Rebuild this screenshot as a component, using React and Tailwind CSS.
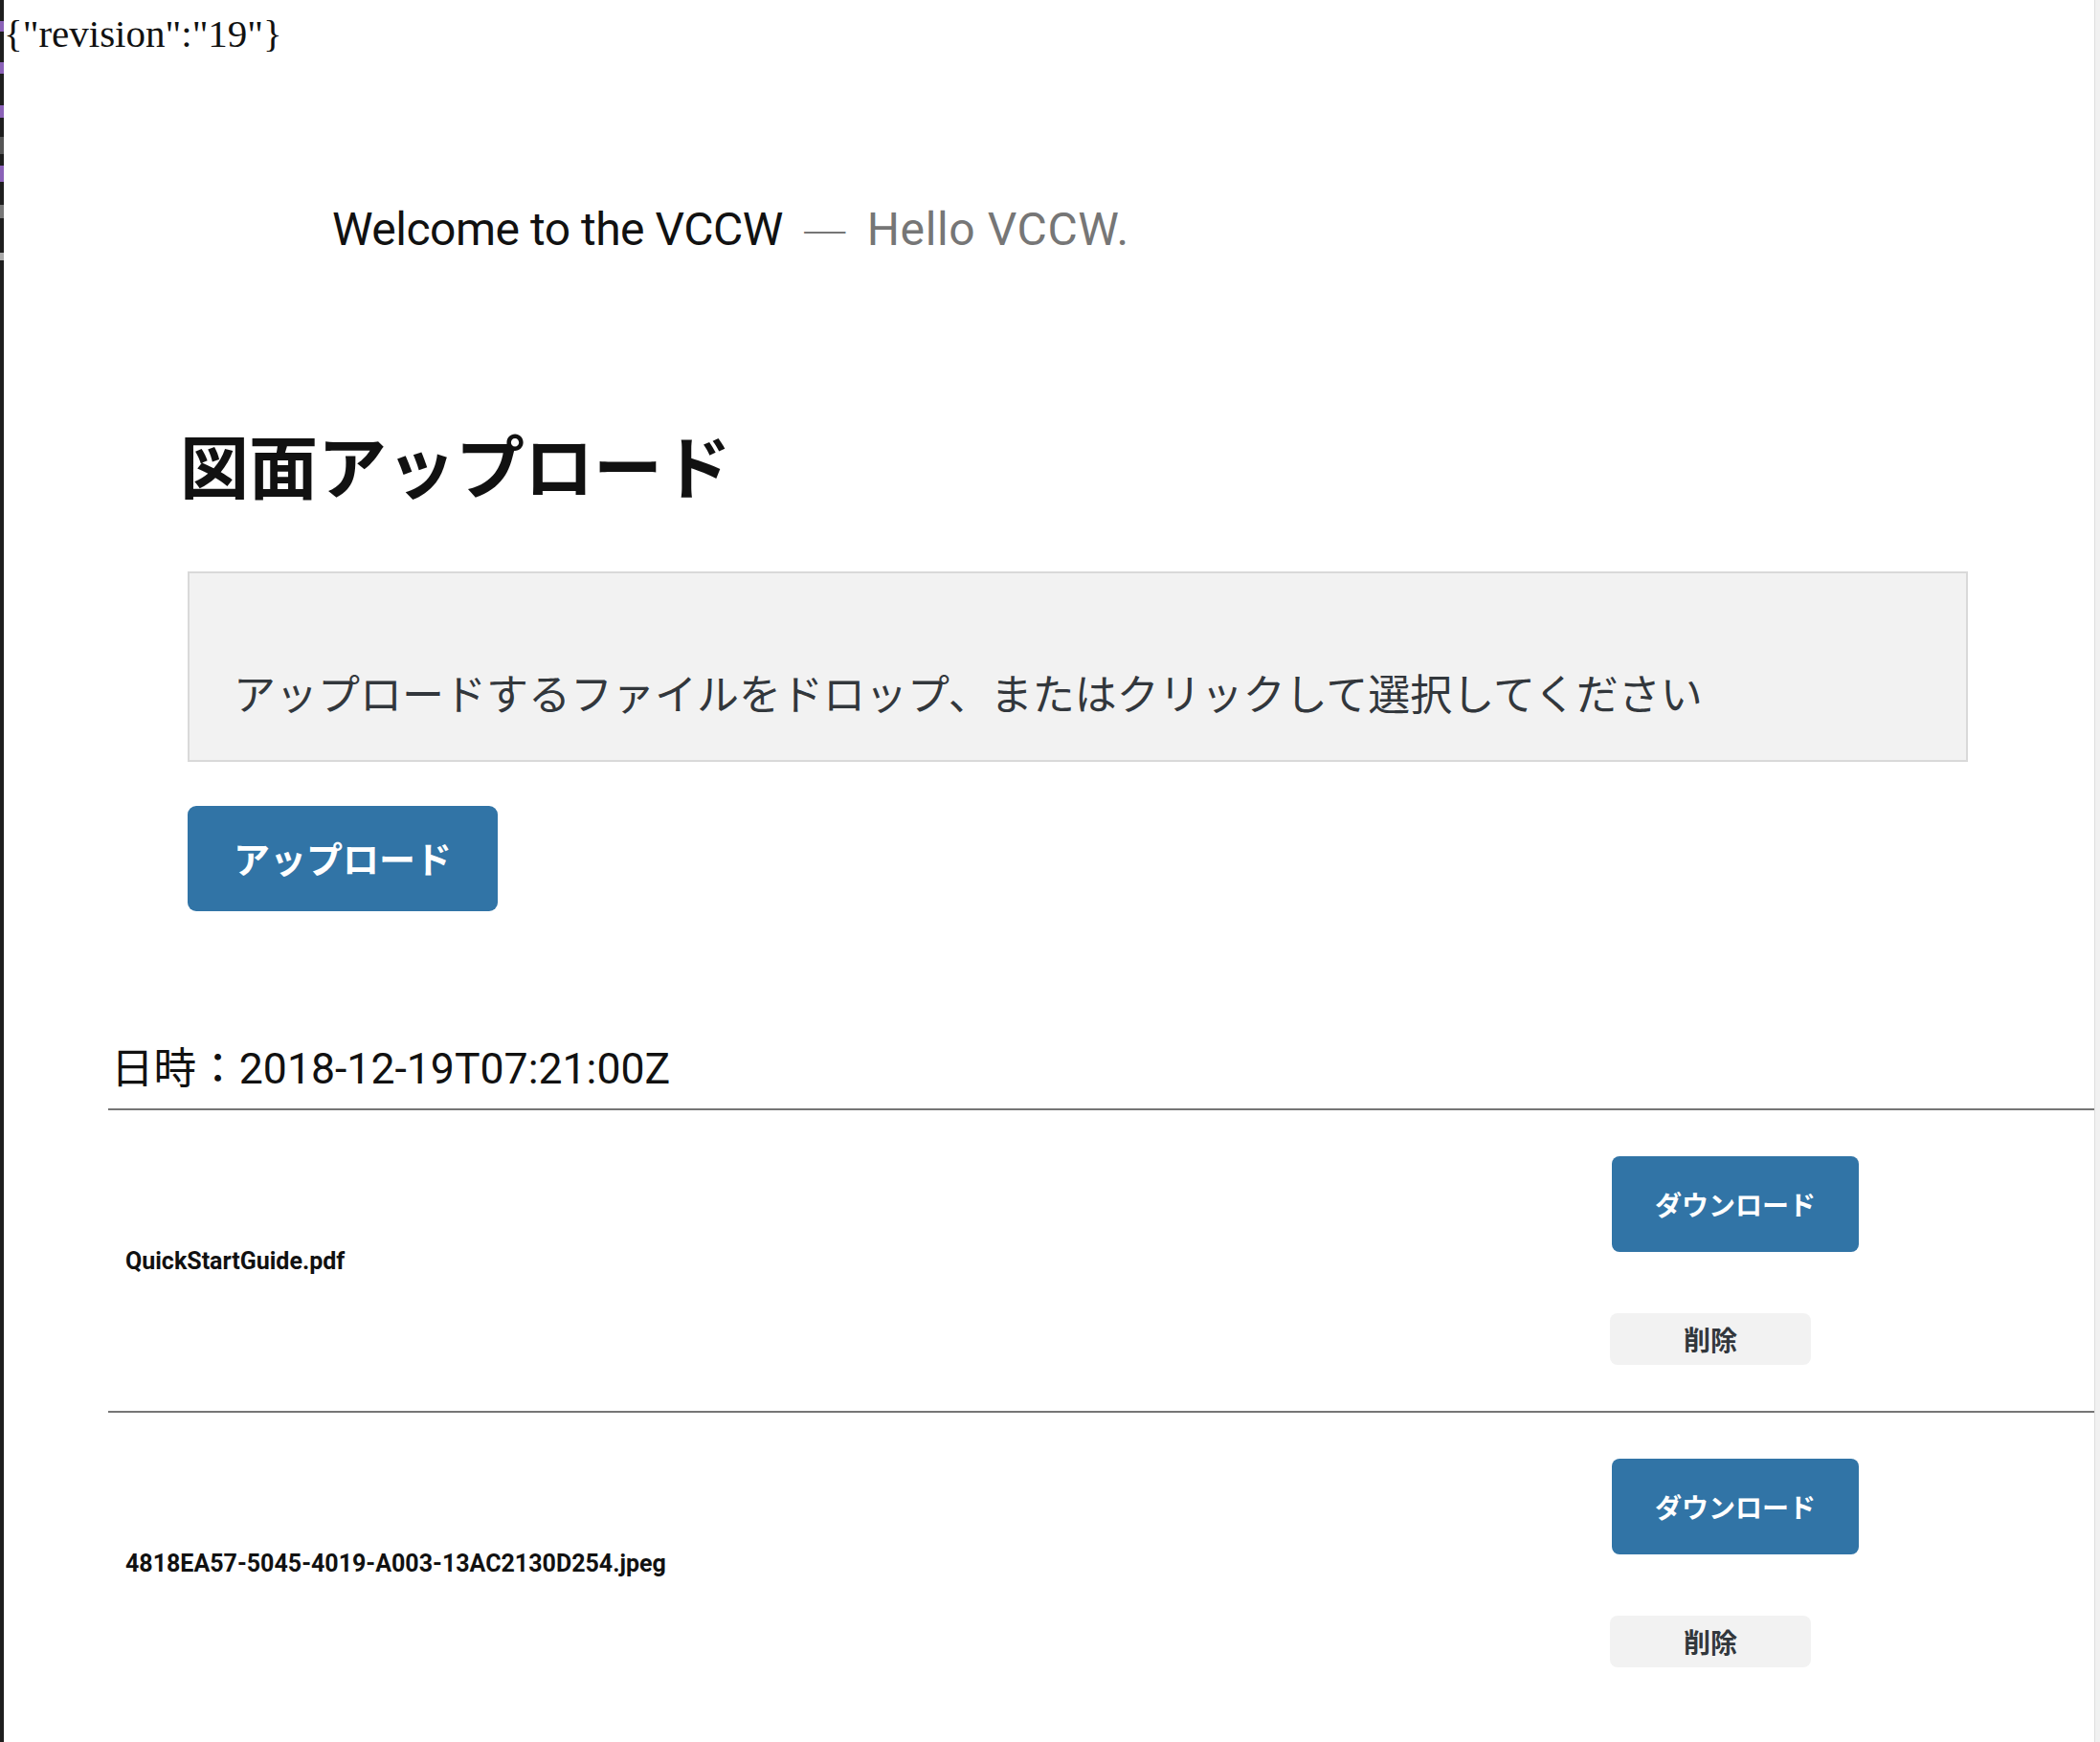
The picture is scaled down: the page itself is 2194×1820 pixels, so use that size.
import React from "react";

const sans = "font-['Roboto','Noto_Sans_CJK_JP',sans-serif]";
const cjk = "font-['Noto_Sans_CJK_JP','Roboto',sans-serif]";

const files = [
  { id: 1, name: "QuickStartGuide.pdf" },
  { id: 2, name: "4818EA57-5045-4019-A003-13AC2130D254.jpeg" },
];

const FileRow = ({ file, last }) => {
  return (
    <div className={"flex items-center " + (last ? "" : "border-b-2 border-[#767676]")}>
      <div className={"flex-1 pl-[18px] pt-[1px] text-[25px] font-bold text-[#111] " + sans}>{file.name}</div>
      <div className="w-[506px] flex flex-col items-start gap-[64px] py-[48px]">
        <button
          className={"ml-[2px] w-[258px] h-[100px] rounded-[8px] bg-[#3174a6] text-white text-[28px] font-bold " + cjk}
        >
          ダウンロード
        </button>
        <button
          className={"w-[210px] h-[54px] rounded-[8px] bg-[#f2f2f2] text-[#32373c] text-[28px] font-bold " + cjk}
        >
          削除
        </button>
      </div>
    </div>
  );
};

const App = () => {
  return (
    <div className="flex min-h-[1820px] bg-white">
      {/* edge of the editor window behind */}
      <div className="w-[4px] shrink-0 bg-[#1e1e1e] flex flex-col">
        <div className="mt-[22px] h-[11px] bg-[#8b62b8]" />
        <div className="mt-[32px] h-[12px] bg-[#8b62b8]" />
        <div className="mt-[33px] h-[13px] bg-[#8b62b8]" />
        <div className="mt-[20px] h-[18px] bg-[#555]" />
        <div className="mt-[12px] h-[17px] bg-[#8b62b8]" />
        <div className="mt-[24px] h-[14px] bg-[#777]" />
        <div className="mt-[36px] h-[8px] bg-[#aaa]" />
      </div>

      <main className="flex-1 min-w-0">
        <p className="pt-[12px] text-[41px] leading-[46px] text-[#111] font-['Liberation_Serif',serif]">
          {'{"revision":"19"}'}
        </p>

        <div className={"mt-[153px] ml-[343px] flex items-baseline gap-[20px] text-[48px] leading-[56px] " + sans}>
          <span className="text-[#111] tracking-[-0.5px]">Welcome to the VCCW</span>
          <span className="text-[#767676] font-['DejaVu_Sans',sans-serif] font-light">—</span>
          <span className="text-[#767676] tracking-[0.6px]">Hello VCCW.</span>
        </div>

        <h1 className={"mt-[180px] ml-[184px] text-[72px] leading-[72px] font-bold text-[#111] " + cjk}>
          図面アップロード
        </h1>

        <div className="mt-[77px] ml-[192px] w-[1860px] border-2 border-[#d9d9d9] bg-[#f2f2f2] pt-[92px] pb-[39px] px-[46px]">
          <p className={"text-[44px] leading-[64px] text-[#32373c] " + cjk}>
            アップロードするファイルをドロップ、またはクリックして選択してください
          </p>
        </div>

        <button
          className={"mt-[46px] ml-[192px] w-[324px] h-[110px] pb-[3px] rounded-[9px] bg-[#3174a6] text-white text-[38px] font-bold " + cjk}
        >
          アップロード
        </button>

        <section className="mt-[139px] ml-[109px]">
          <div className={"px-[3px] pb-[14px] border-b-2 border-[#767676] text-[44.6px] leading-[53px] text-[#111] " + sans}>
            日時：2018-12-19T07:21:00Z
          </div>
          {files.map((f, i) => (
            <FileRow key={f.id} file={f} last={i === files.length - 1} />
          ))}
        </section>
      </main>

      {/* scrollbar track */}
      <div className="w-[6px] shrink-0 bg-[#f1f1f1] border-l border-[#dedede]" />
    </div>
  );
};

export default App;
